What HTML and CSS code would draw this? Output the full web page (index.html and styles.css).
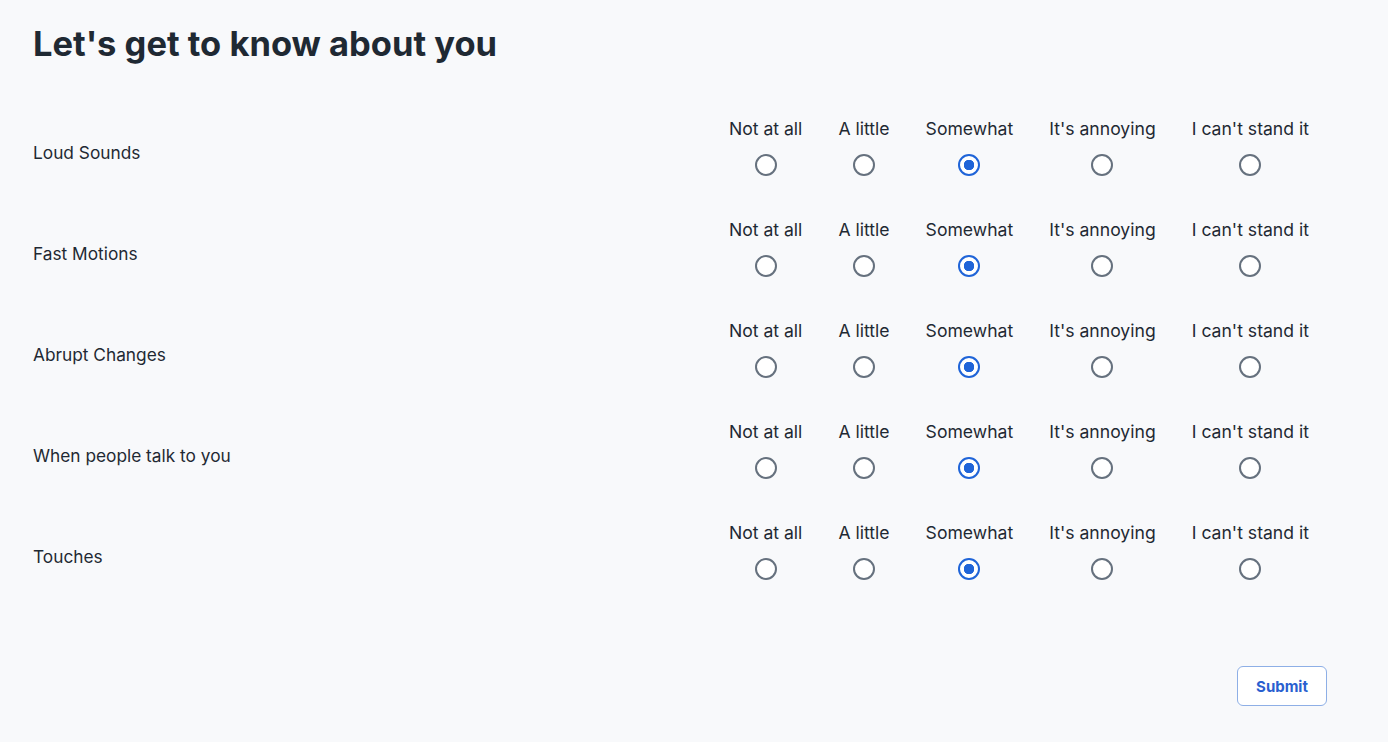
FILE: index.html
```html
<!DOCTYPE html>
<html lang="en">
<head>
    <meta charset="UTF-8">
    <meta name="viewport" content="width=device-width, initial-scale=1.0">
    <title>About You</title>
    <link rel="stylesheet" href="styles.css">
</head>
<body>
    <div class="container">
        <h1>Let's get to know about you</h1>

        <form class="survey">
            <!-- Loud Sounds -->
            <div class="question">
                <div class="question-label">Loud Sounds</div>
                <div class="options">
                    <label class="option"><span>Not at all</span><input type="radio" name="q1"></label>
                    <label class="option"><span>A little</span><input type="radio" name="q1"></label>
                    <label class="option"><span>Somewhat</span><input type="radio" name="q1" checked></label>
                    <label class="option"><span>It's annoying</span><input type="radio" name="q1"></label>
                    <label class="option"><span>I can't stand it</span><input type="radio" name="q1"></label>
                </div>
            </div>

            <!-- Fast Motions -->
            <div class="question">
                <div class="question-label">Fast Motions</div>
                <div class="options">
                    <label class="option"><span>Not at all</span><input type="radio" name="q2"></label>
                    <label class="option"><span>A little</span><input type="radio" name="q2"></label>
                    <label class="option"><span>Somewhat</span><input type="radio" name="q2" checked></label>
                    <label class="option"><span>It's annoying</span><input type="radio" name="q2"></label>
                    <label class="option"><span>I can't stand it</span><input type="radio" name="q2"></label>
                </div>
            </div>

            <!-- Abrupt Changes -->
            <div class="question">
                <div class="question-label">Abrupt Changes</div>
                <div class="options">
                    <label class="option"><span>Not at all</span><input type="radio" name="q3"></label>
                    <label class="option"><span>A little</span><input type="radio" name="q3"></label>
                    <label class="option"><span>Somewhat</span><input type="radio" name="q3" checked></label>
                    <label class="option"><span>It's annoying</span><input type="radio" name="q3"></label>
                    <label class="option"><span>I can't stand it</span><input type="radio" name="q3"></label>
                </div>
            </div>

            <!-- When people talk to you -->
            <div class="question">
                <div class="question-label">When people talk to you</div>
                <div class="options">
                    <label class="option"><span>Not at all</span><input type="radio" name="q4"></label>
                    <label class="option"><span>A little</span><input type="radio" name="q4"></label>
                    <label class="option"><span>Somewhat</span><input type="radio" name="q4" checked></label>
                    <label class="option"><span>It's annoying</span><input type="radio" name="q4"></label>
                    <label class="option"><span>I can't stand it</span><input type="radio" name="q4"></label>
                </div>
            </div>

            <!-- Touches -->
            <div class="question">
                <div class="question-label">Touches</div>
                <div class="options">
                    <label class="option"><span>Not at all</span><input type="radio" name="q5"></label>
                    <label class="option"><span>A little</span><input type="radio" name="q5"></label>
                    <label class="option"><span>Somewhat</span><input type="radio" name="q5" checked></label>
                    <label class="option"><span>It's annoying</span><input type="radio" name="q5"></label>
                    <label class="option"><span>I can't stand it</span><input type="radio" name="q5"></label>
                </div>
            </div>

            <div class="form-actions">
                <button type="button" class="submit-btn">Submit</button>
            </div>
        </form>
    </div>
</body>
</html>
```

FILE: styles.css
```css
* {
    margin: 0;
    padding: 0;
    box-sizing: border-box;
}
body {
    font-family: Inter, "Noto Sans", sans-serif;
    background-color: #f8f9fb;
    color: #1f2933;
}
.container {
    padding: 25px 61px 0 33px;
}
h1 {
    font-size: 34.5px;
    font-weight: 700;
    line-height: 38px;
    color: #1f2933;
}
.survey {
    margin-top: 54px;
}
.question {
    display: flex;
    align-items: center;
    margin-bottom: 30px;
}
.question-label {
    flex: 1;
    font-size: 17.3px;
    line-height: 24px;
}
.options {
    display: flex;
}
.option {
    display: flex;
    flex-direction: column;
    align-items: center;
    padding: 0 18px 12px;
    font-size: 17.6px;
    line-height: 24px;
    cursor: pointer;
}
.option input {
    appearance: none;
    width: 22px;
    height: 22px;
    margin-top: 13px;
    border: 2px solid #66717e;
    border-radius: 50%;
    background-color: #fff;
    cursor: pointer;
}
.option input:checked {
    border-color: #1f64d8;
    background: radial-gradient(circle, #1f64d8 0 5px, #fff 5.5px);
}
.form-actions {
    display: flex;
    justify-content: flex-end;
    margin-top: 74px;
}
.submit-btn {
    width: 90px;
    height: 40px;
    font-family: inherit;
    font-size: 15px;
    font-weight: 700;
    color: #2a5fd0;
    background-color: #fff;
    border: 1px solid #8eafe6;
    border-radius: 6px;
    cursor: pointer;
}
```
